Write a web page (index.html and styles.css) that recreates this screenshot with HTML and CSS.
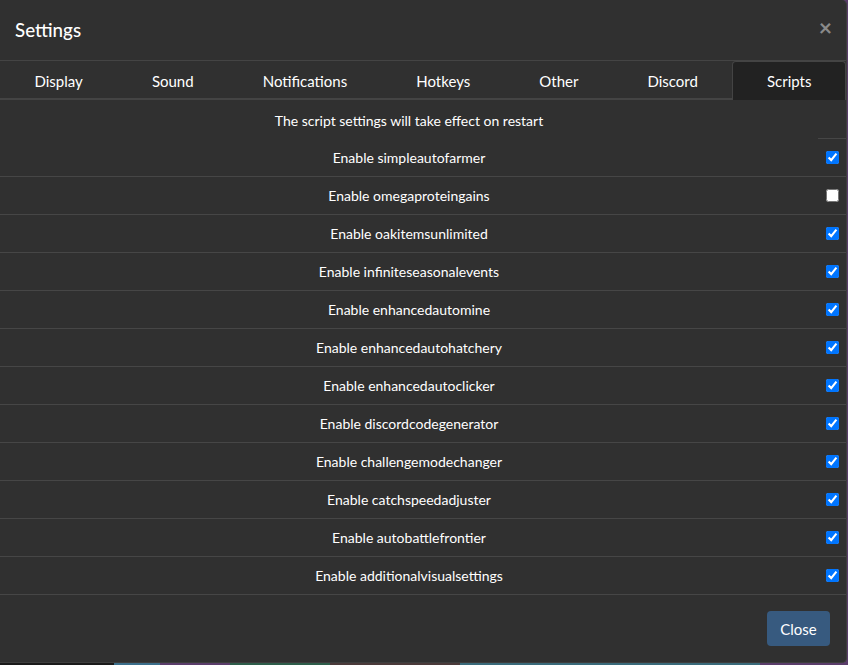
FILE: index.html
```html
<!DOCTYPE html>
<html lang="en">
<head>
    <meta charset="UTF-8">
    <title>Settings</title>
    <link rel="stylesheet" href="styles.css">
</head>
<body>
    <div class="modal">
        <div class="modal-header">
            <h5 class="modal-title">Settings</h5>
            <span class="close">&times;</span>
        </div>

        <ul class="nav-tabs">
            <li class="tab">Display</li>
            <li class="tab">Sound</li>
            <li class="tab">Notifications</li>
            <li class="tab">Hotkeys</li>
            <li class="tab">Other</li>
            <li class="tab">Discord</li>
            <li class="tab active">Scripts</li>
        </ul>

        <table class="settings">
            <tr class="info">
                <td class="label">The script settings will take effect on restart</td>
                <td class="check"></td>
            </tr>
            <tr class="first">
                <td class="label">Enable simpleautofarmer</td>
                <td class="check"><input type="checkbox" checked></td>
            </tr>
            <tr>
                <td class="label">Enable omegaproteingains</td>
                <td class="check"><input type="checkbox"></td>
            </tr>
            <tr>
                <td class="label">Enable oakitemsunlimited</td>
                <td class="check"><input type="checkbox" checked></td>
            </tr>
            <tr>
                <td class="label">Enable infiniteseasonalevents</td>
                <td class="check"><input type="checkbox" checked></td>
            </tr>
            <tr>
                <td class="label">Enable enhancedautomine</td>
                <td class="check"><input type="checkbox" checked></td>
            </tr>
            <tr>
                <td class="label">Enable enhancedautohatchery</td>
                <td class="check"><input type="checkbox" checked></td>
            </tr>
            <tr>
                <td class="label">Enable enhancedautoclicker</td>
                <td class="check"><input type="checkbox" checked></td>
            </tr>
            <tr>
                <td class="label">Enable discordcodegenerator</td>
                <td class="check"><input type="checkbox" checked></td>
            </tr>
            <tr>
                <td class="label">Enable challengemodechanger</td>
                <td class="check"><input type="checkbox" checked></td>
            </tr>
            <tr>
                <td class="label">Enable catchspeedadjuster</td>
                <td class="check"><input type="checkbox" checked></td>
            </tr>
            <tr>
                <td class="label">Enable autobattlefrontier</td>
                <td class="check"><input type="checkbox" checked></td>
            </tr>
            <tr class="last">
                <td class="label">Enable additionalvisualsettings</td>
                <td class="check"><input type="checkbox" checked></td>
            </tr>
        </table>

        <div class="modal-footer">
            <button class="btn">Close</button>
        </div>
    </div>
</body>
</html>
```

FILE: styles.css
```css
body {
    margin: 0;
    height: 665px;
    overflow: hidden;
    font-family: Lato, "Open Sans", sans-serif;
    font-size: 15px;
    color: #fff;
    background: linear-gradient(90deg, #1a1a1a 0 114px, #3b6e8a 114px 160px, #5a3d6a 160px 230px, #2e5d4a 230px 330px, #4a3a3a 330px 460px, #3a6a7a 460px 760px, #5a3d6a 760px);
}

.modal {
    width: 846px;
    height: 662px;
    background-color: #303030;
    border-right: 1px solid #3e3e3e;
    border-bottom: 1px solid #3e3e3e;
    border-bottom-right-radius: 5px;
    border-top-right-radius: 5px;
    display: flex;
    flex-direction: column;
}

/* Cabecalho */
.modal-header {
    display: flex;
    justify-content: space-between;
    align-items: center;
    height: 60px;
    padding: 0 15px;
    border-bottom: 1px solid #444;
}

.modal-title {
    margin: 0;
    font-size: 18.75px;
    font-weight: 500;
    line-height: 30px;
}

.close {
    font-size: 23px;
    font-weight: 700;
    color: #8a8a8a;
    line-height: 1;
    margin-top: -6px;
    margin-right: -1px;
}

/* Abas */
.nav-tabs {
    display: flex;
    list-style: none;
    margin: 0;
    padding: 0;
    border-bottom: 2px solid #444;
}

.tab {
    flex: 1 1 auto;
    text-align: center;
    font-size: 15px;
    line-height: 22px;
    padding: 8px 16px 6px;
    margin-bottom: -2px;
    border: 1px solid transparent;
    border-bottom: none;
    border-radius: 4px 4px 0 0;
}

.tab.active {
    background-color: #222;
    border-color: #444;
    padding-bottom: 8px;
}

/* Tabela */
.settings {
    width: 100%;
    border-collapse: collapse;
    font-size: 14px;
}

.settings td {
    border-top: 1px solid #464646;
    height: 37px;
    padding: 0 4px;
}

.settings .info td {
    border-top: none;
    height: 36px;
    padding-top: 2px;
}

.settings .first td.label {
    border-top: none;
}

.settings .last td {
    border-bottom: 1px solid #464646;
}

.label {
    text-align: center;
}

.check {
    width: 20px;
    text-align: right;
}

.check input {
    margin: 0 3px 0 4px;
    display: block;
}

/* Rodape */
.modal-footer {
    flex: 1;
    display: flex;
    justify-content: flex-end;
    align-items: flex-start;
    padding: 16px 16px 0 0;
}

.btn {
    font-family: Lato, "Open Sans", sans-serif;
    font-size: 15px;
    color: #fff;
    background-color: #375a7f;
    border: none;
    border-radius: 4px;
    padding: 0 12px;
    height: 35px;
    width: 63px;
}
```
